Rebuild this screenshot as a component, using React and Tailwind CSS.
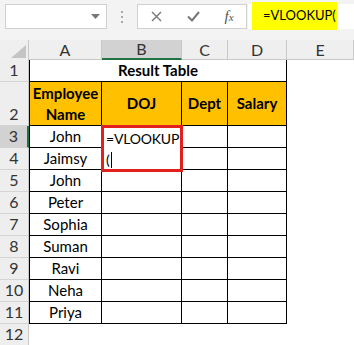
import React from 'react';

const names = ['John', 'Jaimsy', 'John', 'Peter', 'Sophia', 'Suman', 'Ravi', 'Neha', 'Priya'];

const colHeads = [
  { label: 'A', w: 'w-[73px]' },
  { label: 'B', w: 'w-[80px]', active: true },
  { label: 'C', w: 'w-[46px]' },
  { label: 'D', w: 'w-[59px]' },
  { label: 'E', w: 'flex-1' },
];

const RowHead = ({ n, h = 'h-[22px]', active }) => (
  <div
    className={`w-[29px] shrink-0 ${h} flex items-end justify-center pb-[1px] text-[16px] leading-[20px] text-[#333] border-b border-[#d4d4d4] ${
      active ? 'bg-[#d2d2d2] border-r-2 border-r-[#217346]' : 'bg-[#eeeeee] border-r border-r-[#c8c8c8]'
    }`}
  >
    {n}
  </div>
);

const App = () => {
  return (
    <div className="w-[354px] h-[345px] overflow-hidden bg-white font-['Lato','Liberation_Sans',sans-serif] text-black">
      {/* Formula bar */}
      <div className="h-[40px] bg-[#f3f3f3] flex items-start pt-[4px] pl-[5px]">
        <div className="w-[102px] h-[25px] bg-white border border-[#d0d0d0] flex items-center justify-end pr-[6px]">
          <svg width="9" height="6" viewBox="0 0 9 6">
            <path d="M0 0 L9 0 L4.5 5 Z" fill="#777" />
          </svg>
        </div>
        <div className="w-[30px] h-[25px] flex flex-col items-center justify-center gap-[3px]">
          <span className="w-[2px] h-[2px] bg-[#aaa]" />
          <span className="w-[2px] h-[2px] bg-[#aaa]" />
          <span className="w-[2px] h-[2px] bg-[#aaa]" />
        </div>
        <div className="w-[110px] h-[25px] bg-white border border-[#d0d0d0] flex items-center">
          <div className="w-[37px] flex justify-center">
            <svg width="11" height="11" viewBox="0 0 11 11">
              <path d="M1 1 L10 10 M10 1 L1 10" stroke="#777" strokeWidth="1.4" />
            </svg>
          </div>
          <div className="w-[37px] flex justify-center">
            <svg width="13" height="11" viewBox="0 0 13 11">
              <path d="M1 5.5 L5 9.5 L12 1" stroke="#777" strokeWidth="2" fill="none" />
            </svg>
          </div>
          <div className="w-[34px] flex justify-center items-baseline font-['Liberation_Serif',serif] italic text-[#555] leading-none">
            <span className="text-[15px]">f</span>
            <span className="text-[11px]">x</span>
          </div>
        </div>
        <div className="flex-1 h-[25px] bg-white ml-[1px] pl-[4px] flex items-start">
          <div className="-mt-[2px] h-[28px] w-[85px] bg-[#ffff00] flex items-center pl-[11px] text-[13px]">
            =VLOOKUP(
          </div>
        </div>
      </div>

      {/* Column headers */}
      <div className="flex h-[20px] bg-[#efefef]">
        <div className="w-[29px] shrink-0 relative border-r border-[#c8c8c8]">
          <svg className="absolute right-[2px] bottom-[2px]" width="15" height="13" viewBox="0 0 15 13">
            <path d="M15 0 L15 13 L0 13 Z" fill="#c4c4c4" />
          </svg>
        </div>
        {colHeads.map((c) => (
          <div
            key={c.label}
            className={`${c.w} shrink-0 flex items-center justify-center text-[16px] text-[#333] border-r border-[#c8c8c8] ${
              c.active ? 'bg-[#d2d2d2] border-b-2 border-b-[#217346] text-[#1f5e3c]' : 'border-b border-b-[#c8c8c8]'
            }`}
          >
            {c.label}
          </div>
        ))}
      </div>

      {/* Grid */}
      <div className="relative">
        {/* Row 1 */}
        <div className="flex">
          <RowHead n={1} />
          <div className="w-[258px] h-[22px] border-x border-b border-black flex items-center justify-center font-bold text-[15px]">
            Result Table
          </div>
        </div>

        {/* Row 2 */}
        <div className="flex">
          <RowHead n={2} h="h-[44px]" />
          <div className="w-[73px] h-[44px] bg-[#ffc000] border-l border-r border-b border-black flex items-center justify-center text-center font-bold text-[15px] leading-[21px]">
            Employee<br />Name
          </div>
          <div className="w-[80px] h-[44px] bg-[#ffc000] border-r border-b border-black flex items-center justify-center font-bold text-[15px]">
            DOJ
          </div>
          <div className="w-[46px] h-[44px] bg-[#ffc000] border-r border-b border-black flex items-center justify-center font-bold text-[15px]">
            Dept
          </div>
          <div className="w-[59px] h-[44px] bg-[#ffc000] border-r border-b border-black flex items-center justify-center font-bold text-[15px]">
            Salary
          </div>
        </div>

        {/* Data rows */}
        {names.map((name, i) => (
          <div key={i} className="flex">
            <RowHead n={i + 3} active={i === 0} />
            <div className="w-[73px] h-[22px] border-l border-r border-b border-black flex items-center justify-center text-[15px]">
              {name}
            </div>
            <div className="w-[80px] h-[22px] border-r border-b border-black" />
            <div className="w-[46px] h-[22px] border-r border-b border-black" />
            <div className="w-[59px] h-[22px] border-r border-b border-black" />
          </div>
        ))}

        {/* Row 12 */}
        <div className="flex">
          <RowHead n={12} />
        </div>

        {/* Cell being edited */}
        <div className="absolute left-[101px] top-[65px] w-[82px] h-[47px] border-[3px] border-[#e3201b] bg-white pl-[2px] text-[14px] leading-[21px] tracking-[-0.2px] whitespace-nowrap overflow-hidden">
          <div>=VLOOKUP</div>
          <div className="flex items-center">
            (<span className="inline-block w-[1px] h-[16px] bg-black ml-[1px]" />
          </div>
        </div>
      </div>
    </div>
  );
};

export default App;
